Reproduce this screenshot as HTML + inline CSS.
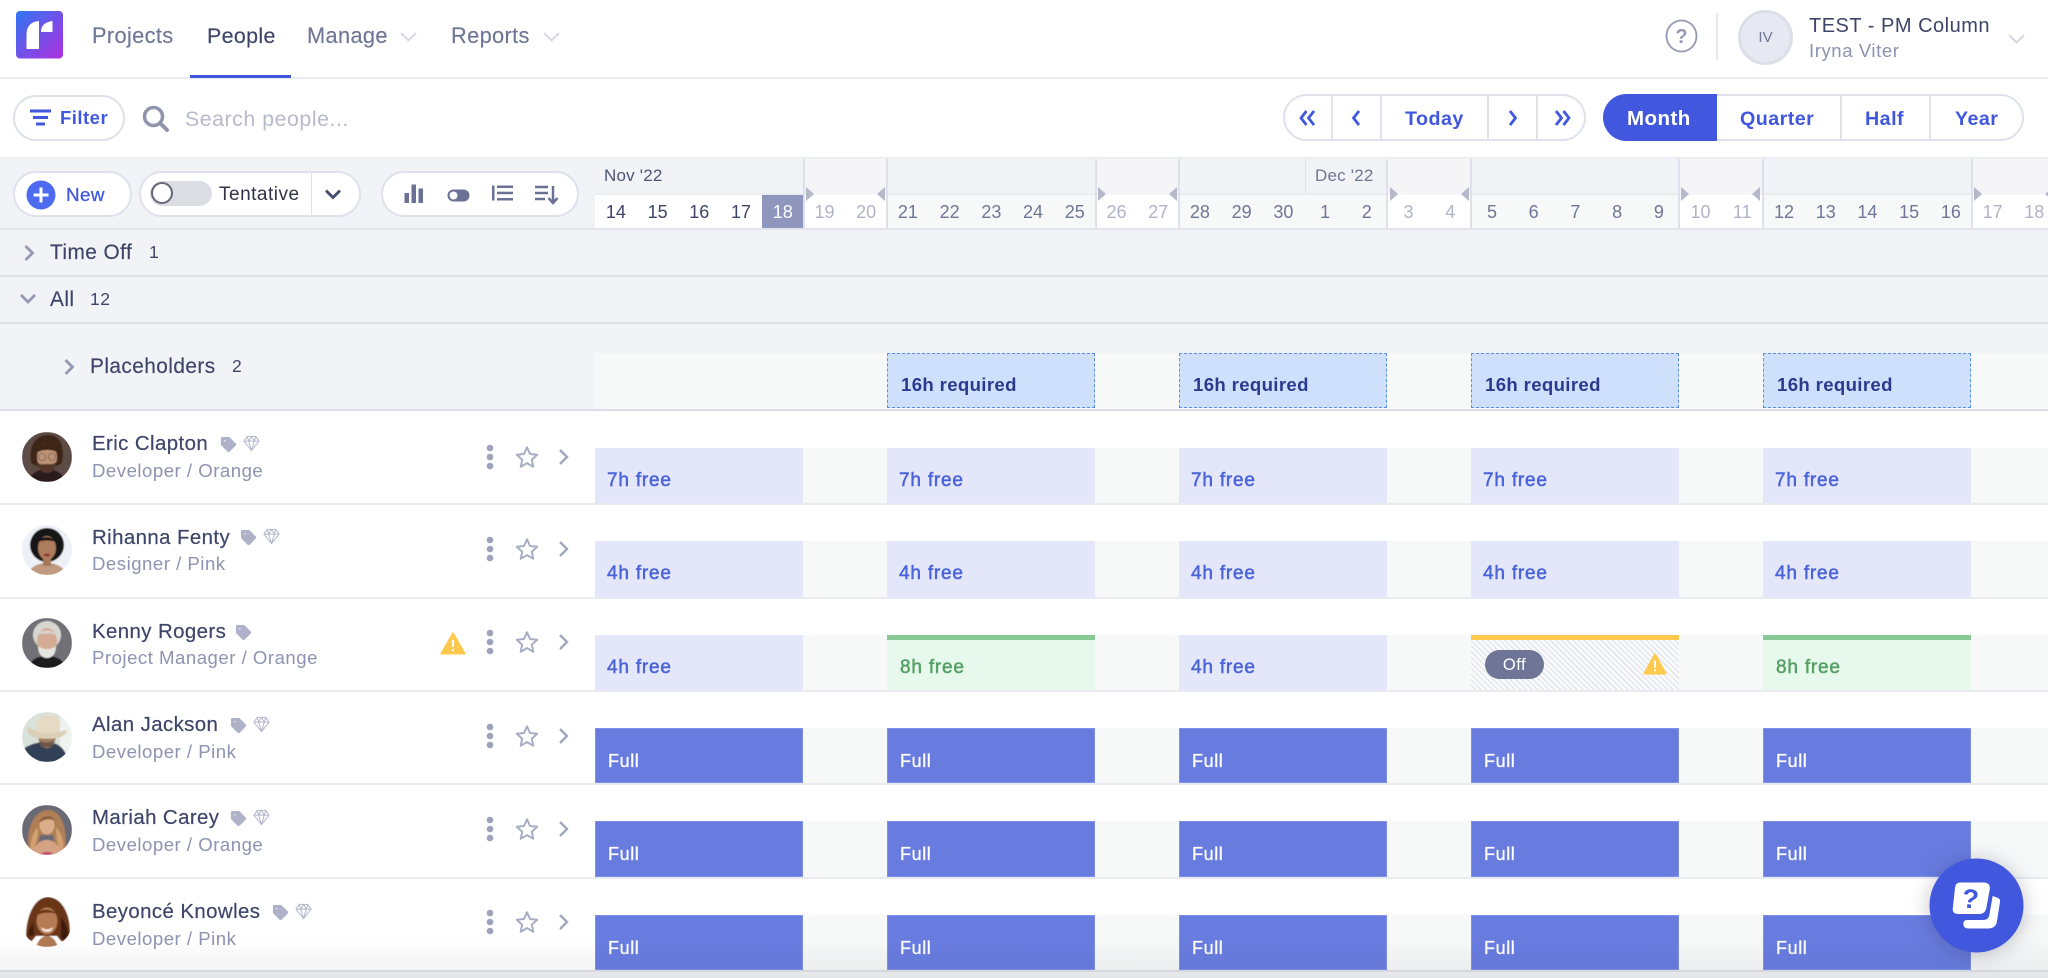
<!DOCTYPE html>
<html><head><meta charset="utf-8"><title>People</title>
<style>
*{box-sizing:border-box}
html,body{margin:0;padding:0;width:2048px;height:978px;overflow:hidden;background:#fff}
body{position:relative;font-family:"Liberation Sans",sans-serif;color:#3d4468}
.a,.t{position:absolute}
.t{white-space:nowrap;line-height:28px;height:28px}
svg{position:absolute;overflow:visible}
.nav{font-size:21.8px;letter-spacing:.35px;color:#6f7696;-webkit-text-stroke:.15px #6f7696}
.blue{color:#4158de;font-weight:700;font-size:18.600px;letter-spacing:.45px}
.pill{background:#fff;border:2px solid #dfe1ec;border-radius:24px}
.row{position:absolute;left:0;width:2048px;background:#fff}
.line{position:absolute;left:0;width:2048px;height:2px;background:#e9eaf2}
.band{position:absolute;left:595px;right:0;background:#f7f8f8}
.name{left:92px;top:19px;font-size:20.400px;letter-spacing:.42px;color:#3e4569;-webkit-text-stroke:.2px #3e4569}
.sub{left:92px;top:46px;font-size:18.600px;letter-spacing:.5px;color:#8d93b0}
.bar{position:absolute;width:208px;font-size:18.600px;font-weight:700;letter-spacing:.35px;line-height:22px}
.c1{left:595px}.c2{left:887px}.c3{left:1179px}.c4{left:1471px}.c5{left:1763px}
.free{top:37px;height:56px;background:#e4e7fa;color:#4a63d8;padding:22px 0 0 12px;font-weight:400;font-size:19px;letter-spacing:.8px;-webkit-text-stroke:.5px #4a63d8}
.green{top:37px;height:56px;background:#e7f8ec;border-top:5px solid #86c995;color:#55a165;padding:17px 0 0 13px;font-weight:400;font-size:19px;letter-spacing:.8px;-webkit-text-stroke:.5px #55a165}
.full{top:37px;height:56px;background:#687ce0;color:#fff;padding:22px 0 0 13px;box-shadow:inset 0 0 0 1px #7f90ea;font-weight:400;font-size:18px;letter-spacing:.6px;-webkit-text-stroke:.3px #fff}
.req{top:353px;height:55px;background:#cfe0fd;border:1px dashed #5b8fe8;color:#2a3a8c;padding:20px 0 0 13px}
.days{position:absolute;left:595px;top:195px;display:flex;height:33px}
.d{width:41.72px;flex:none;text-align:center;font-size:18px;line-height:35px;background:#f7f8f8;color:#6f7696}
.w{background:#fff;color:#b0b4c6}.k{background:#fff;color:#3d4468}
.sep{position:absolute;top:159px;height:70px;width:2px;background:#dfe1ea}
.wk{position:absolute;top:159px;height:36px;width:83px;background:#f5f5f7}
.grp{font-size:20.800px;letter-spacing:.45px;-webkit-text-stroke:.15px #3d4468}
.seg{font-size:19.700px}
</style></head><body>

<svg width="0" height="0" style="position:absolute"><defs>
<symbol id="tag" viewBox="0 0 18 18"><path d="M1 2.500C1 1.600 1.600 1 2.500 1H9c.6 0 1 .2 1.400.6l6.200 6.200c.7.7.7 1.700 0 2.400l-6.300 6.300c-.7.7-1.700.7-2.400 0L1.600 10.200C1.200 9.800 1 9.400 1 8.800Z" fill="#aeb1c8"/><circle cx="5" cy="5" r=".9" fill="#e8e9f0"/></symbol>
<symbol id="gem" viewBox="0 0 18 17"><g fill="none" stroke="#b5b8cc" stroke-width="1.100" stroke-linejoin="round"><path d="M4.500 1h9L17 6 9 16 1 6Z"/><path d="M1 6h16M6 6l3 10 3-10M4.500 1 6 6l3-5 3 5 1.500-5"/></g></symbol>
<symbol id="star" viewBox="0 0 24 24"><path d="M12 2.300l3 6.700 7.200.8-5.400 4.900 1.500 7.100-6.300-3.700-6.300 3.700 1.500-7.100L1.800 9.800 9 9Z" fill="none" stroke="#a9adc4" stroke-width="2" stroke-linejoin="round"/></symbol>
<symbol id="acts" viewBox="0 0 90 30"><circle cx="5" cy="6" r="3.300" fill="#9ea2ba"/><circle cx="5" cy="15" r="3.300" fill="#9ea2ba"/><circle cx="5" cy="24" r="3.300" fill="#9ea2ba"/><use href="#star" x="30" y="3" width="24" height="24"/><path d="M75 8l7 7-7 7" fill="none" stroke="#a2a6bd" stroke-width="2.400"/></symbol>
<clipPath id="cc"><circle cx="25" cy="25" r="25"/></clipPath>
<filter id="bl"><feGaussianBlur stdDeviation=".6"/></filter>
</defs></svg>

<!-- top nav -->
<svg style="left:0;top:0" width="80" height="76"><defs><linearGradient id="lg" x1="0" y1="0" x2="1" y2="1"><stop offset="0" stop-color="#2f76f2"/><stop offset="1" stop-color="#b02fe0"/></linearGradient></defs><rect x="16" y="11" width="47" height="47.500" rx="4" fill="url(#lg)"/><path d="M26.500 49V35Q26.500 22 39 21V49Z" fill="#fff"/><path d="M41 32Q41 22.500 52.500 21V32Z" fill="#fff"/></svg>
<div class="t nav" style="left:92px;top:22px">Projects</div>
<div class="t nav" style="left:207px;top:22px;color:#3d4468;-webkit-text-stroke:.15px #3d4468;font-size:21.4px">People</div>
<div class="t nav" style="left:307px;top:22px">Manage</div>
<div class="t nav" style="left:451px;top:22px">Reports</div>
<svg style="left:400px;top:32px" width="17" height="10"><path d="M1 1l7.500 7.500L16 1" fill="none" stroke="#d6d8e4" stroke-width="2"/></svg>
<svg style="left:543px;top:32px" width="17" height="10"><path d="M1 1l7.500 7.500L16 1" fill="none" stroke="#d6d8e4" stroke-width="2"/></svg>
<div class="a" style="left:0;top:77px;width:2048px;height:2px;background:#ebecf2"></div>
<div class="a" style="left:190px;top:75px;width:101px;height:2.500px;background:#4158de"></div>

<svg style="left:1665px;top:19px" width="33" height="34"><ellipse cx="16.500" cy="17" rx="15" ry="15.500" fill="none" stroke="#9599b3" stroke-width="1.800"/><text x="16.500" y="24" text-anchor="middle" font-family="Liberation Sans" font-weight="700" font-size="20" fill="#9599b3">?</text></svg>
<div class="a" style="left:1716px;top:13px;width:2px;height:47px;background:#e8e9f0"></div>
<div class="a" style="left:1738px;top:10px;width:55px;height:55px;border-radius:50%;background:#e6e8f2;border:3px solid #dcdee8;text-align:center;font-size:15px;line-height:50px;color:#6f7696">IV</div>
<div class="t" style="left:1809px;top:12px;font-size:20px;letter-spacing:.5px;color:#3d4468">TEST - PM Column</div>
<div class="t" style="left:1809px;top:37px;font-size:18.600px;letter-spacing:.55px;color:#8d93b0">Iryna Viter</div>
<svg style="left:2008px;top:34px" width="17" height="10"><path d="M1 1l7.500 7.500L16 1" fill="none" stroke="#d6d8e4" stroke-width="2"/></svg>

<!-- toolbar -->
<div class="a pill" style="left:13px;top:95px;width:112px;height:46px"></div>
<svg style="left:30px;top:108px" width="22" height="20"><path d="M0 3h21M3 9.500h15M6 16h9" stroke="#4158de" stroke-width="3" fill="none"/></svg>
<div class="t blue" style="left:60px;top:104px">Filter</div>
<svg style="left:142px;top:105px" width="28" height="27"><circle cx="11.500" cy="11.500" r="9" fill="none" stroke="#9095ad" stroke-width="3.500"/><path d="M18 18l7 7" stroke="#9095ad" stroke-width="4" stroke-linecap="round"/></svg>
<div class="t" style="left:185px;top:105px;font-size:21.300px;letter-spacing:.55px;color:#b7bacb">Search people...</div>

<div class="a pill" style="left:1283px;top:94px;width:303px;height:47px"></div>
<div class="a" style="left:1331px;top:95px;width:2px;height:46px;background:#dfe1ec"></div>
<div class="a" style="left:1380px;top:95px;width:2px;height:46px;background:#dfe1ec"></div>
<div class="a" style="left:1487px;top:95px;width:2px;height:46px;background:#dfe1ec"></div>
<div class="a" style="left:1536px;top:95px;width:2px;height:46px;background:#dfe1ec"></div>
<svg style="left:1298px;top:109px" width="20" height="18"><path d="M8.500 2L3 9l5.500 7M16 2l-5.500 7 5.500 7" fill="none" stroke="#4158de" stroke-width="2.800"/></svg>
<svg style="left:1350px;top:109px" width="12" height="18"><path d="M9 2L3.500 9 9 16" fill="none" stroke="#4158de" stroke-width="2.800"/></svg>
<svg style="left:1507px;top:109px" width="12" height="18"><path d="M3 2l5.500 7L3 16" fill="none" stroke="#4158de" stroke-width="2.800"/></svg>
<svg style="left:1553px;top:109px" width="20" height="18"><path d="M3 2l5.500 7L3 16M10.500 2l5.500 7-5.500 7" fill="none" stroke="#4158de" stroke-width="2.800"/></svg>
<div class="t blue seg" style="left:1405px;top:105px">Today</div>

<div class="a pill" style="left:1603px;top:94px;width:421px;height:47px"></div>
<div class="a" style="left:1603px;top:94px;width:114px;height:47px;background:#4158de;border-radius:24px 0 0 24px"></div>
<div class="a" style="left:1840px;top:95px;width:2px;height:46px;background:#dfe1ec"></div>
<div class="a" style="left:1929px;top:95px;width:2px;height:46px;background:#dfe1ec"></div>
<div class="t blue seg" style="left:1627px;top:105px;color:#fff;font-size:20.500px">Month</div>
<div class="t blue seg" style="left:1740px;top:105px">Quarter</div>
<div class="t blue seg" style="left:1865px;top:105px">Half</div>
<div class="t blue seg" style="left:1955px;top:105px">Year</div>

<!-- gray header band -->
<div class="a" style="left:0;top:157px;width:2048px;height:254px;background:#f2f3f6"></div>
<div class="a" style="left:0;top:157px;width:2048px;height:2px;background:#ecedf2"></div>

<div class="a pill" style="left:13px;top:171px;width:119px;height:46px"></div>
<svg style="left:26px;top:180px" width="30" height="30"><circle cx="15" cy="15" r="14.500" fill="#4e6bf0"/><path d="M15 7.500v15M7.500 15h15" stroke="#fff" stroke-width="3"/></svg>
<div class="t blue" style="left:66px;top:181px;font-weight:400;font-size:18.800px;-webkit-text-stroke:.3px #4158de">New</div>

<div class="a pill" style="left:139px;top:171px;width:222px;height:46px"></div>
<div class="a" style="left:311px;top:172px;width:1px;height:44px;background:#dfe1ec"></div>
<div class="a" style="left:150px;top:181px;width:62px;height:25px;border-radius:13px;background:#dcdde3"></div>
<div class="a" style="left:151px;top:182px;width:22px;height:22px;border-radius:50%;background:#fff;border:2px solid #65677a"></div>
<div class="t" style="left:219px;top:181px;font-size:19px;letter-spacing:.5px;color:#2f3345">Tentative</div>
<svg style="left:324px;top:189px" width="18" height="11"><path d="M2 1.500l7 7 7-7" fill="none" stroke="#4a5070" stroke-width="3"/></svg>

<div class="a pill" style="left:381px;top:171px;width:198px;height:46px"></div>
<svg style="left:404px;top:184px" width="20" height="19" fill="#6b7194"><rect x="0.500" y="9" width="4.500" height="10"/><rect x="7.500" y="0.500" width="4.500" height="18.500"/><rect x="14.500" y="4.500" width="4.500" height="14.500"/></svg>
<svg style="left:447px;top:189px" width="23" height="13"><rect x="0.500" y="0.500" width="22" height="12" rx="6" fill="#6b7194"/><circle cx="6.500" cy="6.500" r="4" fill="#fff"/></svg>
<svg style="left:492px;top:185px" width="21" height="16" fill="#6b7194"><rect x="0" y="0.500" width="2.500" height="15"/><rect x="5" y="0.500" width="16" height="2.500"/><rect x="5" y="6.700" width="16" height="2.500"/><rect x="5" y="13" width="16" height="2.500"/></svg>
<svg style="left:535px;top:185px" width="22" height="20" fill="none" stroke="#6b7194" stroke-width="2.500"><path d="M0 2h13M0 8h13M0 14h10"/><path d="M18 1v16M13.500 13l4.500 5 4.500-5"/></svg>

<!-- date header -->
<div class="a" style="left:595px;top:193px;width:1453px;height:2px;background:#ebecf1"></div>
<div class="wk" style="left:804px"></div><div class="wk" style="left:1096px"></div><div class="wk" style="left:1388px"></div><div class="wk" style="left:1680px"></div><div class="wk" style="left:1972px"></div>
<div class="t" style="left:604px;top:162px;font-size:17px;letter-spacing:.2px;color:#4e5473">Nov '22</div>
<div class="t" style="left:1315px;top:162px;font-size:17px;letter-spacing:.2px;color:#6f7696">Dec '22</div>
<div class="a" style="left:1305px;top:159px;width:1px;height:34px;background:#dfe1ea"></div>

<div class="days">
<div class="d k">14</div><div class="d k">15</div><div class="d k">16</div><div class="d k">17</div><div class="d" style="background:#8e96bd;color:#fff">18</div><div class="d w">19</div><div class="d w">20</div>
<div class="d">21</div><div class="d">22</div><div class="d">23</div><div class="d">24</div><div class="d">25</div><div class="d w">26</div><div class="d w">27</div>
<div class="d">28</div><div class="d">29</div><div class="d">30</div><div class="d">1</div><div class="d">2</div><div class="d w">3</div><div class="d w">4</div>
<div class="d">5</div><div class="d">6</div><div class="d">7</div><div class="d">8</div><div class="d">9</div><div class="d w">10</div><div class="d w">11</div>
<div class="d">12</div><div class="d">13</div><div class="d">14</div><div class="d">15</div><div class="d">16</div><div class="d w">17</div><div class="d w">18</div>
</div>
<div class="sep" style="left:803px"></div><div class="sep" style="left:886px"></div>
<div class="sep" style="left:1095px"></div><div class="sep" style="left:1178px"></div>
<div class="sep" style="left:1386px"></div><div class="sep" style="left:1470px"></div>
<div class="sep" style="left:1678px"></div><div class="sep" style="left:1762px"></div>
<div class="sep" style="left:1971px"></div>
<svg style="left:0;top:0" width="2048" height="230" fill="#b6b9cc">
<path d="M806 187l8 7-8 7ZM885 187l-8 7 8 7ZM1098 187l8 7-8 7ZM1177 187l-8 7 8 7ZM1390 187l8 7-8 7ZM1469 187l-8 7 8 7ZM1681 187l8 7-8 7ZM1760 187l-8 7 8 7ZM1974 187l8 7-8 7ZM2053 187l-8 7 8 7Z"/>
</svg>
<div class="a" style="left:0;top:228px;width:2048px;height:2px;background:#e2e3ec"></div>

<!-- group rows -->
<svg style="left:23px;top:244px" width="12" height="18"><path d="M2.500 2l7 7-7 7" fill="none" stroke="#9499b3" stroke-width="2.800"/></svg>
<div class="t grp" style="left:50px;top:239px">Time Off</div>
<div class="t" style="left:149px;top:238px;font-size:17.500px;letter-spacing:.3px">1</div>
<div class="a" style="left:0;top:275px;width:2048px;height:2px;background:#dfe0e9"></div>
<svg style="left:19px;top:293px" width="18" height="12"><path d="M2 2l7 7 7-7" fill="none" stroke="#9499b3" stroke-width="2.800"/></svg>
<div class="t grp" style="left:50px;top:286px">All</div>
<div class="t" style="left:90px;top:285px;font-size:17.500px;letter-spacing:.5px">12</div>
<div class="a" style="left:0;top:322px;width:2048px;height:2px;background:#dfe0e9"></div>
<svg style="left:63px;top:358px" width="12" height="18"><path d="M2.500 2l7 7-7 7" fill="none" stroke="#9499b3" stroke-width="2.800"/></svg>
<div class="t grp" style="left:90px;top:353px">Placeholders</div>
<div class="t" style="left:232px;top:352px;font-size:17.500px;letter-spacing:.3px">2</div>
<div class="a" style="left:595px;top:353px;width:1453px;height:56px;background:#f7f8f8"></div>
<div class="bar req c2">16h required</div><div class="bar req c3">16h required</div><div class="bar req c4">16h required</div><div class="bar req c5">16h required</div>
<div class="a" style="left:0;top:409px;width:2048px;height:2px;background:#dcdde8"></div>

<!-- people rows -->
<div class="row" style="top:411px;height:92px">
 <svg style="left:22px;top:21px" width="50" height="50"><g clip-path="url(#cc)"><g filter="url(#bl)"><rect width="50" height="50" fill="#5d4b45"/><path d="M6 50c2-9 11-13 19-13s16 4 19 13Z" fill="#2a1f1b"/><path d="M9 31C6 12 15 3 26 3c12 0 17 10 14 28l-5 3H14Z" fill="#3d2719"/><ellipse cx="25" cy="25" rx="10" ry="13" fill="#bd9478"/><path d="M14 21c3-7 8-9 12-9 5 0 9 3 10 9-5-4-16-4-22 0Z" fill="#3d2719"/><path d="M16 31c3 2 6 1 9 1s6 1 9-2c0 7-4 11-9 11s-9-4-9-10Z" fill="#55392a"/><circle cx="20" cy="25" r="3.600" fill="none" stroke="#7a5a44" stroke-width=".8"/><circle cx="30" cy="25" r="3.600" fill="none" stroke="#7a5a44" stroke-width=".8"/></g></g></svg>
 <div class="t name">Eric Clapton</div><div class="t sub" style="top:46px">Developer / Orange</div>
 <svg style="left:220px;top:25px" width="17" height="17"><use href="#tag" width="17" height="17"/></svg>
 <svg style="left:243px;top:24px" width="17" height="17"><use href="#gem" width="17" height="17"/></svg>
 <svg style="left:485px;top:31px" width="90" height="30"><use href="#acts" width="90" height="30"/></svg>
 <div class="band" style="top:37px;height:55px"></div>
 <div class="bar free c1">7h free</div><div class="bar free c2">7h free</div><div class="bar free c3">7h free</div><div class="bar free c4">7h free</div><div class="bar free c5">7h free</div>
</div>
<div class="line" style="top:503px"></div>

<div class="row" style="top:505px;height:92px">
 <svg style="left:22px;top:20px" width="50" height="50"><g clip-path="url(#cc)"><g filter="url(#bl)"><rect width="50" height="50" fill="#eef0f7"/><path d="M5 50c3-8 11-12 20-12s17 4 20 12Z" fill="#c09a7e"/><ellipse cx="25" cy="20" rx="17" ry="17" fill="#151315"/><rect x="21" y="30" width="8" height="11" fill="#a77858"/><ellipse cx="25" cy="23" rx="9" ry="12" fill="#ad7b5b"/><path d="M16 17c3-6 13-7 18 0-4-2-14-2-18 0Z" fill="#151315"/><ellipse cx="25" cy="30" rx="3.500" ry="1.500" fill="#8e3b3b"/></g></g></svg>
 <div class="t name" style="top:19px">Rihanna Fenty</div><div class="t sub" style="top:45px">Designer / Pink</div>
 <svg style="left:240px;top:24px" width="17" height="17"><use href="#tag" width="17" height="17"/></svg>
 <svg style="left:263px;top:23px" width="17" height="17"><use href="#gem" width="17" height="17"/></svg>
 <svg style="left:485px;top:29px" width="90" height="30"><use href="#acts" width="90" height="30"/></svg>
 <div class="band" style="top:36px;height:56px"></div>
 <div class="bar free c1" style="top:36px">4h free</div><div class="bar free c2" style="top:36px">4h free</div><div class="bar free c3" style="top:36px">4h free</div><div class="bar free c4" style="top:36px">4h free</div><div class="bar free c5" style="top:36px">4h free</div>
</div>
<div class="line" style="top:597px"></div>

<div class="row" style="top:599px;height:91px">
 <svg style="left:22px;top:19px" width="50" height="50"><g clip-path="url(#cc)"><g filter="url(#bl)"><rect width="50" height="50" fill="#6f7076"/><path d="M6 50c3-9 10-12 19-12s16 3 19 12Z" fill="#1c1b1d"/><ellipse cx="25" cy="17" rx="14" ry="14" fill="#d8d6d0"/><ellipse cx="25" cy="23" rx="10" ry="13" fill="#d4ab94"/><path d="M16 28c3 2 5 3 9 3s6-1 9-3c0 8-4 12-9 12s-9-4-9-12Z" fill="#e6e4df"/><path d="M15 17c4-6 15-6 20 0-5-2-15-2-20 0Z" fill="#d8d6d0"/></g></g></svg>
 <div class="t name">Kenny Rogers</div><div class="t sub" style="top:45px">Project Manager / Orange</div>
 <svg style="left:235px;top:25px" width="17" height="17"><use href="#tag" width="17" height="17"/></svg>
 <svg style="left:440px;top:33px" width="26" height="23"><path d="M13 1.500L24.500 21.500H1.500Z" fill="#ffc94d" stroke="#ffc94d" stroke-width="2" stroke-linejoin="round"/><path d="M13 8v7M13 17.200v2" stroke="#fff" stroke-width="2"/></svg>
 <svg style="left:485px;top:28px" width="90" height="30"><use href="#acts" width="90" height="30"/></svg>
 <div class="band" style="top:36px;height:55px"></div>
 <div class="bar free c1" style="top:36px;height:55px">4h free</div>
 <div class="bar green c2" style="top:36px;height:55px">8h free</div>
 <div class="bar free c3" style="top:36px;height:55px">4h free</div>
 <div class="bar c4" style="top:36px;height:55px;border-top:5px solid #ffc94d;background:repeating-linear-gradient(45deg,#fbfbfc 0 2.500px,#e4e6ee 2.500px 4px)"></div>
 <div class="a" style="left:1485px;top:51px;width:59px;height:29px;border-radius:15px;background:#6f7597;color:#fff;text-align:center;font-size:16.500px;letter-spacing:.5px;line-height:31px">Off</div>
 <svg style="left:1643px;top:54px" width="24" height="22"><path d="M12 1.500L22.500 20.500H1.500Z" fill="#ffc94d" stroke="#ffc94d" stroke-width="2" stroke-linejoin="round"/><path d="M12 7.500v7M12 16.200v2" stroke="#fff" stroke-width="1.800"/></svg>
 <div class="bar green c5" style="top:36px;height:55px">8h free</div>
</div>
<div class="line" style="top:690px"></div>

<div class="row" style="top:692px;height:91px">
 <svg style="left:22px;top:20px" width="50" height="50"><g clip-path="url(#cc)"><g filter="url(#bl)"><rect width="50" height="50" fill="#d9e2da"/><path d="M38 0h12v50H38Z" fill="#eef3f0"/><path d="M0 50V38c6-5 14-8 24-8s16 4 20 12l2 8Z" fill="#333f58"/><ellipse cx="25" cy="26" rx="8.500" ry="10" fill="#a07c62"/><path d="M6 15c7 6 28 7 38 3 3-1 0 5-5 7-10 3-24 2-30-1-3-2-4-6-3-9Z" fill="#dccfb6"/><path d="M14 19C13 9 19 3 27 3s12 6 11 16c-8 3-17 3-24 0Z" fill="#e6dac4"/><path d="M17 29c4 2 11 2 15 0l-2 6h-11Z" fill="#6a5546"/></g></g></svg>
 <div class="t name">Alan Jackson</div><div class="t sub">Developer / Pink</div>
 <svg style="left:230px;top:25px" width="17" height="17"><use href="#tag" width="17" height="17"/></svg>
 <svg style="left:253px;top:24px" width="17" height="17"><use href="#gem" width="17" height="17"/></svg>
 <svg style="left:485px;top:29px" width="90" height="30"><use href="#acts" width="90" height="30"/></svg>
 <div class="band" style="top:36px;height:55px"></div>
 <div class="bar full c1" style="top:36px;height:55px">Full</div><div class="bar full c2" style="top:36px;height:55px">Full</div><div class="bar full c3" style="top:36px;height:55px">Full</div><div class="bar full c4" style="top:36px;height:55px">Full</div><div class="bar full c5" style="top:36px;height:55px">Full</div>
</div>
<div class="line" style="top:783px"></div>

<div class="row" style="top:785px;height:92px">
 <svg style="left:22px;top:20px" width="50" height="50"><g clip-path="url(#cc)"><g filter="url(#bl)"><rect width="50" height="50" fill="#6b6b74"/><path d="M8 50c3-10 10-15 17-15s14 5 17 15Z" fill="#d5a283"/><path d="M18 50h14l-4-3h-6Z" fill="#c24f6e"/><path d="M7 46C3 26 12 5 26 5c14 0 20 20 17 41l-10-8-2-8H18l-2 9Z" fill="#b07f54"/><ellipse cx="25" cy="20" rx="7.500" ry="9.500" fill="#dbad8a"/><path d="M17 18c2-8 12-10 16-2-5-3-11-2-16 2Z" fill="#8a5f3a"/><path d="M9 46c-2-10 3-20 7-24 0 10-1 18-7 24ZM41 46c2-10-3-20-7-24 0 10 1 18 7 24Z" fill="#d2a273"/></g></g></svg>
 <div class="t name">Mariah Carey</div><div class="t sub">Developer / Orange</div>
 <svg style="left:230px;top:25px" width="17" height="17"><use href="#tag" width="17" height="17"/></svg>
 <svg style="left:253px;top:24px" width="17" height="17"><use href="#gem" width="17" height="17"/></svg>
 <svg style="left:485px;top:29px" width="90" height="30"><use href="#acts" width="90" height="30"/></svg>
 <div class="band" style="top:36px;height:56px"></div>
 <div class="bar full c1" style="top:36px">Full</div><div class="bar full c2" style="top:36px">Full</div><div class="bar full c3" style="top:36px">Full</div><div class="bar full c4" style="top:36px">Full</div><div class="bar full c5" style="top:36px">Full</div>
</div>
<div class="line" style="top:877px"></div>

<div class="row" style="top:879px;height:91px">
 <svg style="left:22px;top:18px" width="50" height="50"><g clip-path="url(#cc)"><g filter="url(#bl)"><rect width="50" height="50" fill="#fff"/><path d="M4 40C4 18 13 0 26 0c13 0 22 16 22 34 1 8-4 12-9 10l-4-5H14l-4 5c-3 0-5-2-6-4Z" fill="#6a3418"/><path d="M14 50c2-7 6-11 11-11s9 4 11 11Z" fill="#b07a52"/><ellipse cx="25" cy="24" rx="10.500" ry="13.500" fill="#b57b52"/><path d="M14 19c3-7 13-9 21-2-7-2-15-2-21 2Z" fill="#6a3418"/><path d="M19 30c4 3 8 3 12 0-1 4-3 5-6 5s-5-1-6-5Z" fill="#f4e4da"/><path d="M39 20c5 6 8 14 7 22l-7 0ZM11 26c-3 4-5 9-4 13l5-1Z" fill="#3d1a0b"/></g></g></svg>
 <div class="t name" style="top:19px">Beyoncé Knowles</div><div class="t sub">Developer / Pink</div>
 <svg style="left:272px;top:25px" width="17" height="17"><use href="#tag" width="17" height="17"/></svg>
 <svg style="left:295px;top:24px" width="17" height="17"><use href="#gem" width="17" height="17"/></svg>
 <svg style="left:485px;top:28px" width="90" height="30"><use href="#acts" width="90" height="30"/></svg>
 <div class="band" style="top:36px;height:55px"></div>
 <div class="bar full c1" style="top:36px;height:55px">Full</div><div class="bar full c2" style="top:36px;height:55px">Full</div><div class="bar full c3" style="top:36px;height:55px">Full</div><div class="bar full c4" style="top:36px;height:55px">Full</div><div class="bar full c5" style="top:36px;height:55px">Full</div>
</div>
<div class="line" style="top:970px;background:#dfe0e8"></div>
<div class="a" style="left:0;top:972px;width:2048px;height:6px;background:#f2f3f5"></div>
<div class="a" style="left:0;top:938px;width:2048px;height:40px;background:linear-gradient(rgba(60,60,70,0),rgba(60,60,70,.07))"></div>

<!-- help fab -->
<svg style="left:1929px;top:858px;filter:drop-shadow(0 2px 10px rgba(40,40,70,.28))" width="95" height="95">
<circle cx="47.500" cy="47.500" r="47" fill="#4158de"/>
<path d="M63.700 38 L69 40 Q71.500 41 71 44 L68 63 Q67 70.500 59 70.500 H39.500 Q34.500 70.500 34.300 66 Q34.500 62 38 62 H54 Q60 62 60.500 56 Z" fill="#fff"/>
<path d="M31 24.500 H54 Q61.500 24.500 60.800 31 L57.500 49 Q56.500 56 50 56 H29.500 Q23 56 23.800 50 L26 30 Q26.500 24.500 31 24.500Z" fill="#fff"/>
<text x="41.500" y="50" text-anchor="middle" font-family="Liberation Sans" font-weight="700" font-size="27" fill="#4158de" transform="rotate(6 41 40)">?</text>
</svg>
</body></html>
